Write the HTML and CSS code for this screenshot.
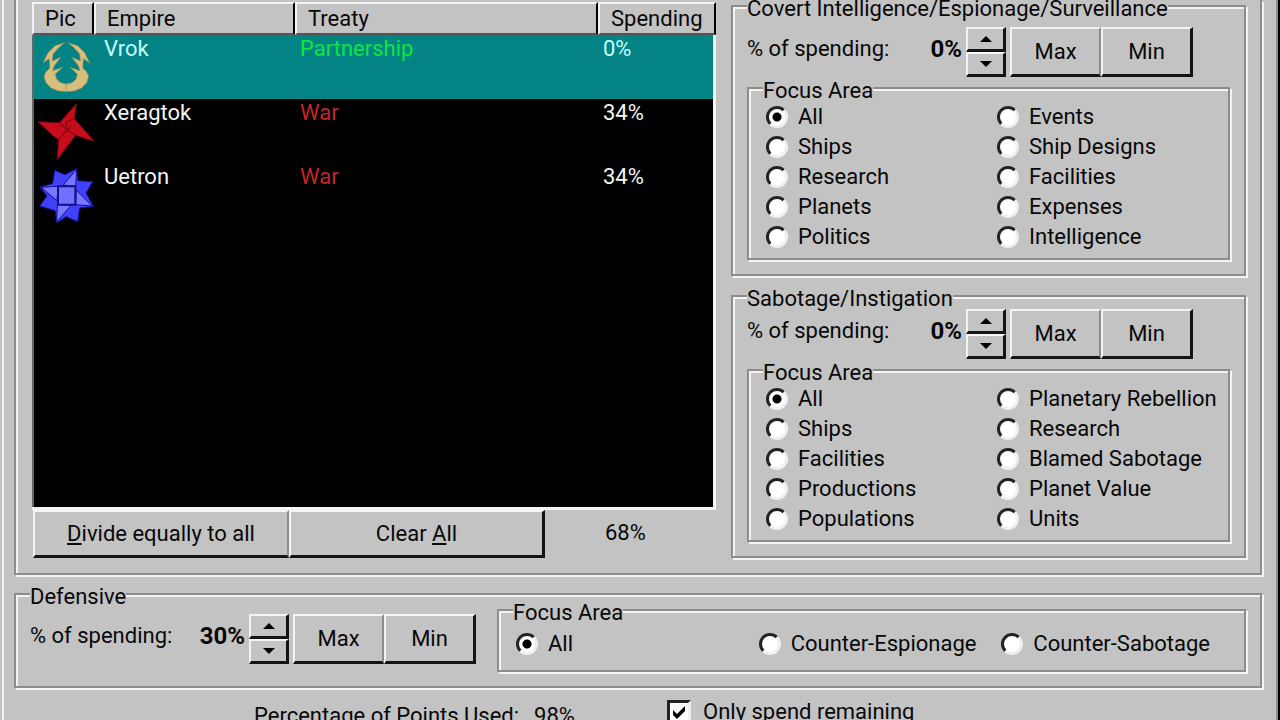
FILE: index.html
```html
<!DOCTYPE html>
<html lang="en">
  <head>
    <meta charset="UTF-8" />
    <meta name="viewport" content="width=device-width, initial-scale=1.0" />
    <title>Intelligence</title>
    <link rel="stylesheet" href="styles.css">
  </head>
  <body>
    <div class="window">
      <main class="offensive">
        <section class="empires">
          <div class="list">
            <table>
              <colgroup>
                <col class="col-pic" />
                <col class="col-empire" />
                <col class="col-treaty" />
                <col />
              </colgroup>
              <thead>
                <tr>
                  <th>Pic</th>
                  <th>Empire</th>
                  <th>Treaty</th>
                  <th>Spending</th>
                </tr>
              </thead>
              <tbody>
                <tr class="selected">
                  <td>
                    <svg class="emblem" viewBox="114 105 168 192" aria-hidden="true">
                      <g fill="#d8be7c" stroke="#8f8a5c" stroke-width="2">
                        <path id="horn" d="M194 128 L165 137 L144 158 L129 189 L147 176 L149 190 L149 205 L138 215 L132 229 L137 247 L153 264 L176 273 L200 275 L200 252 L182 248 L170 238 L166 222 L188 202 L158 212 L163 197 L183 171 L157 183 L159 162 L176 143 Z" />
                        <use href="#horn" transform="translate(398 0) scale(-1 1)" />
                      </g>
                    </svg>
                  </td>
                  <td>Vrok</td>
                  <td class="partner">Partnership</td>
                  <td>0%</td>
                </tr>
                <tr>
                  <td>
                    <svg class="emblem" viewBox="114 297 168 192" aria-hidden="true">
                      <path d="M229 311 L223 356 L283 424 L227 406 L171 479 L176 419 L160 408 L114 365 L179 368 Z" fill="#c80c1c" stroke="#720812" stroke-width="3" />
                      <path d="M223 356 L199 366 L201 390 L176 419 M179 368 L201 390 L227 406 M213 379 L190 402" fill="none" stroke="#8b0710" stroke-width="4" />
                    </svg>
                  </td>
                  <td>Xeragtok</td>
                  <td class="war">War</td>
                  <td>34%</td>
                </tr>
                <tr>
                  <td>
                    <svg class="emblem" viewBox="114 489 168 192" aria-hidden="true">
                      <g stroke="#1212a0" stroke-width="3">
                        <path d="M164 511 L195 524 L230 506 L233 542 L278 545 L258 579 L280 619 L239 624 L233 665 L199 650 L170 668 L166 632 L119 618 L141 588 L120 561 L158 551 Z" fill="#4141fa" />
                        <path d="M230 508 L227 559 L190 555 Z M276 618 L227 614 L229 570 Z M170 666 L172 614 L213 616 Z M123 562 L174 559 L171 602 Z" fill="#7777ff" />
                        <path d="M174 559 H226 V614 H174 Z" fill="#7070ff" stroke="#111188" stroke-width="6" />
                      </g>
                    </svg>
                  </td>
                  <td>Uetron</td>
                  <td class="war">War</td>
                  <td>34%</td>
                </tr>
              </tbody>
            </table>
          </div>
          <div class="list-actions">
            <button type="button"><u>D</u>ivide equally to all</button>
            <button type="button" class="last">Clear <u>A</u>ll</button>
            <span class="total">68%</span>
          </div>
        </section>

        <section class="operations">
          <fieldset class="covert">
            <legend>Covert Intelligence/Espionage/Surveillance</legend>
            <div class="spending">
              <span>% of spending:</span>
              <output>0%</output>
              <div class="spinner">
                <button type="button" aria-label="Increase"><svg viewBox="0 0 12 6"><path d="M6 0 L12 6 H0 Z" /></svg></button>
                <button type="button" aria-label="Decrease"><svg viewBox="0 0 12 6"><path d="M0 0 H12 L6 6 Z" /></svg></button>
              </div>
              <div class="limits">
                <button type="button">Max</button>
                <button type="button" class="last">Min</button>
              </div>
            </div>
            <fieldset>
              <legend>Focus Area</legend>
              <div class="options">
                <label><input type="radio" name="covert" checked />All</label>
                <label><input type="radio" name="covert" />Ships</label>
                <label><input type="radio" name="covert" />Research</label>
                <label><input type="radio" name="covert" />Planets</label>
                <label><input type="radio" name="covert" />Politics</label>
                <label><input type="radio" name="covert" />Events</label>
                <label><input type="radio" name="covert" />Ship Designs</label>
                <label><input type="radio" name="covert" />Facilities</label>
                <label><input type="radio" name="covert" />Expenses</label>
                <label><input type="radio" name="covert" />Intelligence</label>
              </div>
            </fieldset>
          </fieldset>

          <fieldset class="sabotage">
            <legend>Sabotage/Instigation</legend>
            <div class="spending">
              <span>% of spending:</span>
              <output>0%</output>
              <div class="spinner">
                <button type="button" aria-label="Increase"><svg viewBox="0 0 12 6"><path d="M6 0 L12 6 H0 Z" /></svg></button>
                <button type="button" aria-label="Decrease"><svg viewBox="0 0 12 6"><path d="M0 0 H12 L6 6 Z" /></svg></button>
              </div>
              <div class="limits">
                <button type="button">Max</button>
                <button type="button" class="last">Min</button>
              </div>
            </div>
            <fieldset>
              <legend>Focus Area</legend>
              <div class="options">
                <label><input type="radio" name="sabotage" checked />All</label>
                <label><input type="radio" name="sabotage" />Ships</label>
                <label><input type="radio" name="sabotage" />Facilities</label>
                <label><input type="radio" name="sabotage" />Productions</label>
                <label><input type="radio" name="sabotage" />Populations</label>
                <label><input type="radio" name="sabotage" />Planetary Rebellion</label>
                <label><input type="radio" name="sabotage" />Research</label>
                <label><input type="radio" name="sabotage" />Blamed Sabotage</label>
                <label><input type="radio" name="sabotage" />Planet Value</label>
                <label><input type="radio" name="sabotage" />Units</label>
              </div>
            </fieldset>
          </fieldset>
        </section>
      </main>

      <fieldset class="defensive">
        <legend>Defensive</legend>
        <div class="defensive-row">
          <div class="spending">
            <span>% of spending:</span>
            <output>30%</output>
            <div class="spinner">
              <button type="button" aria-label="Increase"><svg viewBox="0 0 12 6"><path d="M6 0 L12 6 H0 Z" /></svg></button>
              <button type="button" aria-label="Decrease"><svg viewBox="0 0 12 6"><path d="M0 0 H12 L6 6 Z" /></svg></button>
            </div>
            <div class="limits">
              <button type="button">Max</button>
              <button type="button" class="last">Min</button>
            </div>
          </div>
          <fieldset>
            <legend>Focus Area</legend>
            <div class="options options-row">
              <label><input type="radio" name="defensive" checked />All</label>
              <label><input type="radio" name="defensive" />Counter-Espionage</label>
              <label><input type="radio" name="defensive" />Counter-Sabotage</label>
            </div>
          </fieldset>
        </div>
      </fieldset>

      <footer>
        <p><span>Percentage of Points Used:</span><span>98%</span></p>
        <label><input type="checkbox" checked />Only spend remaining</label>
      </footer>
    </div>
  </body>
</html>
```
FILE: styles.css
```css
* {
  box-sizing: border-box;
}

body {
  margin: 0;
  height: 100vh;
  overflow: hidden;
  background-color: #c3c3c3;
  color: #080808;
  font-family: Roboto, sans-serif;
  font-size: 22px;
  line-height: 28px;
}

.window {
  height: 100vh;
  margin-left: 2px;
  padding: 0 16px 0 10px;
  border-left: 2px solid #f4f4f4;
  border-right: 2px solid #000;
  box-shadow: inset -2px 0 #8c8c8c;
}

.offensive {
  display: grid;
  grid-template-columns: minmax(0, 684fr) minmax(0, 515fr);
  gap: 15px;
  padding: 0 14px 15px 16px;
  border: 2px solid #8c8c8c;
  border-top: none;
  box-shadow: 2px 2px #f4f4f4, inset 2px 0 #f4f4f4;
}

/* empire list */

.empires {
  display: flex;
  flex-direction: column;
  padding-top: 2px;
}

.list {
  flex: 1;
  background-color: #000;
  box-shadow: inset -3px -3px #f4f4f4, inset 2px 0 #666;
}

table {
  width: 100%;
  table-layout: fixed;
  border-spacing: 0;
}

.col-pic {
  width: 62px;
}

.col-empire {
  width: 201px;
}

.col-treaty {
  width: 303px;
}

th {
  height: 33px;
  padding: 0 0 0 11px;
  border: 2px solid #f4f4f4;
  border-right-color: #000;
  border-bottom-color: #555;
  background-color: #c3c3c3;
  font-weight: normal;
  text-align: left;
}

td {
  height: 64px;
  padding: 0 0 0 5px;
  color: #f4f4f4;
  vertical-align: top;
}

td:first-child {
  padding-left: 4px;
  border-left: 2px solid #666;
}

td:nth-child(2) {
  padding-left: 10px;
}

td:last-child {
  border-right: 3px solid #f4f4f4;
}

.selected {
  background-color: #038383;
}

.selected td {
  color: #c4ffff;
}

.selected td.partner {
  color: #08e840;
}

td.war {
  color: #c82428;
}

.emblem {
  display: block;
  width: 56px;
  height: 64px;
}

.list-actions {
  display: grid;
  grid-template-columns: 256px 256px 1fr;
  height: 48px;
  padding-left: 1px;
}

.total {
  padding: 9px 0 0 60px;
}

/* buttons */

button {
  padding: 0;
  border: 2px solid #f4f4f4;
  border-right-color: #8c8c8c;
  border-bottom: 3px solid #141414;
  background-color: #c3c3c3;
  color: inherit;
  font: inherit;
}

button.last {
  border-right: 3px solid #141414;
}

.limits {
  display: grid;
  grid-template-columns: 91px 92px;
}

.spinner {
  display: grid;
  grid-template-rows: 1fr 1fr;
  width: 40px;
  margin: 0 4px;
}

.spinner button {
  display: flex;
  align-items: center;
  justify-content: center;
  border-right: 3px solid #141414;
}

.spinner svg {
  width: 12px;
  height: 6px;
}

/* group boxes */

fieldset {
  min-width: 0;
  margin: 0;
  padding: 3px 0 6px 17px;
  border: 2px solid #8c8c8c;
  box-shadow: 2px 2px #f4f4f4, inset 2px 2px #f4f4f4;
}

legend {
  margin-left: -3px;
  padding: 6px 0 0;
  background-color: #c3c3c3;
  line-height: 16px;
}

.covert,
.sabotage,
.defensive {
  padding: 10px 14px 14px;
}

.covert > legend,
.sabotage > legend,
.defensive > legend {
  margin-left: 0;
}

.covert {
  margin: -5px 0 9px;
}

.sabotage {
  padding-top: 2px;
}

.defensive {
  margin-top: 8px;
}

.spending {
  display: flex;
  height: 50px;
}

.spending > span,
output {
  padding-top: 8px;
}

.spending > span {
  width: 150px;
  white-space: nowrap;
}

.spending output {
  width: 65px;
  font-size: 24px;
  font-weight: bold;
  text-align: right;
}

.options {
  display: grid;
  grid-template-columns: repeat(2, minmax(0, 1fr));
  grid-template-rows: repeat(5, 30px);
  grid-auto-flow: column;
}

label {
  display: flex;
  align-items: center;
  gap: 10px;
  white-space: nowrap;
}

.options-row {
  grid-template: 40px / repeat(3, minmax(0, 1fr));
}

.defensive-row {
  display: grid;
  grid-template-columns: 447px 1fr;
  gap: 20px;
}

.defensive .spending {
  margin-top: -1px;
}

.defensive-row fieldset {
  margin-top: -16px;
}

input {
  flex: none;
  appearance: none;
  width: 22px;
  height: 22px;
  margin: 0;
}

input[type="radio"] {
  border: 3px solid #f0f0f0;
  border-top-color: #222;
  border-left-color: #222;
  border-radius: 50%;
  background-color: #fff;
}

input[type="radio"]:checked {
  background-image: radial-gradient(circle, #000 4px, transparent 5px);
}

input[type="checkbox"] {
  width: 24px;
  height: 24px;
  border: 3px solid #f0f0f0;
  border-top-color: #222;
  border-left-color: #222;
  background: #fff url("data:image/svg+xml,%3Csvg xmlns='http://www.w3.org/2000/svg' viewBox='0 0 18 18'%3E%3Cpath d='M3 7 L7 11 L15 3 V8 L7 16 L3 12 Z'/%3E%3C/svg%3E") center / 18px no-repeat;
}

footer {
  display: grid;
  grid-template-columns: 413px 1fr;
  padding: 11px 0 0 240px;
}

footer p {
  display: flex;
  gap: 15px;
  margin: 3px 0 0;
}

footer label {
  align-self: start;
  height: 26px;
  gap: 12px;
}
```
